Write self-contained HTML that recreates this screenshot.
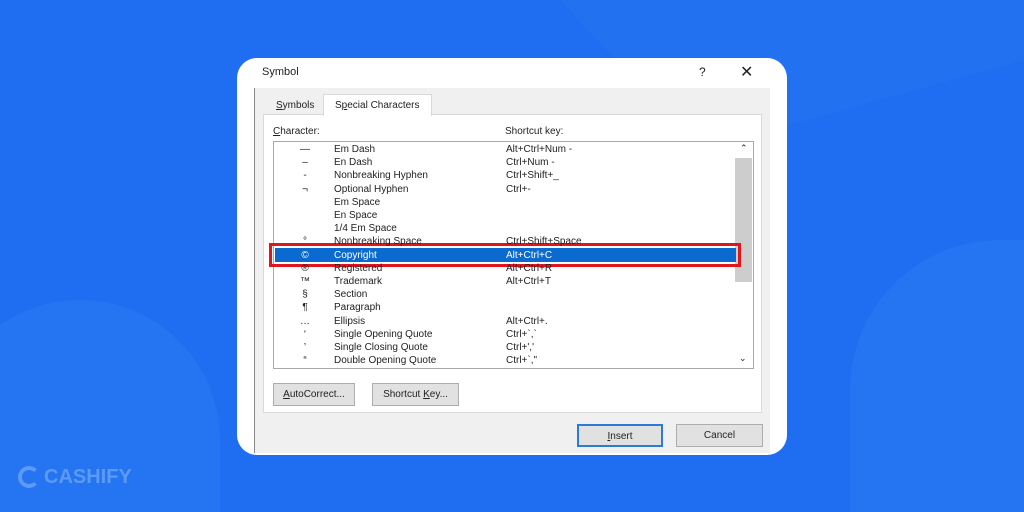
<!DOCTYPE html>
<html style="width:1024px;height:512px;overflow:hidden;background:#1f6df0"><head><style>
*{margin:0;padding:0;box-sizing:border-box}
body{width:1024px;height:512px;overflow:hidden;background:#1f6df0;font-family:"Liberation Sans",sans-serif}
#w{position:relative;width:1024px;height:512px;overflow:hidden}
.a{position:absolute}
.t{font-size:10px;color:#222;white-space:nowrap}
.btn{position:absolute;background:#e1e1e1;border:1px solid #adadad;font-size:10px;text-align:center;line-height:21px;color:#222}
</style></head><body><div id="w">
<div class="a" style="left:-60px;top:300px;width:280px;height:212px;border-radius:140px 140px 0 0;background:#2574f2"></div>
<div class="a" style="left:850px;top:240px;width:174px;height:272px;border-radius:150px 0 0 0;background:#2574f2"></div>
<div class="a" style="left:560px;top:0;width:464px;height:150px;background:#2271f1;clip-path:polygon(0 0,100% 0,100% 40%,30% 100%)"></div>
<div class="a" style="left:18px;top:466px;width:22px;height:22px;border:4px solid #5b9af5;border-radius:50%;border-right-color:transparent"></div>
<div class="a" style="left:44px;top:466px;font-size:20px;font-weight:bold;color:#5b9af5">CASHIFY</div>
<div class="a" style="left:237px;top:58px;width:550px;height:397px;background:#fff;border-radius:20px;overflow:hidden">
 <div class="a" style="left:17px;top:0;width:516px;height:395px;background:#f0f0f0;border-left:1px solid #888"></div>
 <div class="a" style="left:17px;top:0;width:516px;height:30px;background:#fff"></div>
 <div class="a t" style="left:25px;top:8px;font-size:11px">Symbol</div>
 <div class="a t" style="left:462px;top:7px;font-size:12px">?</div>
 <div class="a t" style="left:503px;top:4px;font-size:16px">✕</div>
 <div class="a" style="left:26px;top:56px;width:499px;height:299px;background:#fff;border:1px solid #d9d9d9"></div>
 <div class="a" style="left:86px;top:36px;width:109px;height:22px;background:#fff;border:1px solid #d9d9d9;border-bottom:none"></div>
 <div class="a t" style="left:39px;top:42px"><u>S</u>ymbols</div>
 <div class="a t" style="left:98px;top:42px">S<u>p</u>ecial Characters</div>
 <div class="a t" style="left:36px;top:68px"><u>C</u>haracter:</div>
 <div class="a t" style="left:268px;top:68px">Shortcut key:</div>
 <div class="a" style="left:36px;top:83px;width:481px;height:228px;background:#fff;border:1px solid #aaa"></div>
 <div class="a" style="left:498px;top:100px;width:17px;height:124px;background:#cdcdcd"></div>
 <div class="a t" style="left:503px;top:85px;font-size:9px">⌃</div>
 <div class="a t" style="left:502px;top:295px;font-size:9px">⌄</div>
 <div class="a" style="left:38px;top:190px;width:461px;height:14px;background:#0b6ad0"></div>
 <div class="a" style="left:32px;top:185px;width:472px;height:24px;border:3px solid #e0161e"></div>
 <div class="a" style="left:62px;top:85px;line-height:13.2px;font-size:10px;color:#222;text-align:center;width:12px">—<br>–<br>-<br>¬<br>&nbsp;<br>&nbsp;<br>&nbsp;<br>°<br><span style="color:#fff">©</span><br>®<br>™<br>§<br>¶<br>…<br>‘<br>’<br>“</div>
 <div class="a" style="left:97px;top:85px;line-height:13.2px;font-size:10px;color:#222">Em Dash<br>En Dash<br>Nonbreaking Hyphen<br>Optional Hyphen<br>Em Space<br>En Space<br>1/4 Em Space<br>Nonbreaking Space<br><span style="color:#fff">Copyright</span><br>Registered<br>Trademark<br>Section<br>Paragraph<br>Ellipsis<br>Single Opening Quote<br>Single Closing Quote<br>Double Opening Quote</div>
 <div class="a" style="left:269px;top:85px;line-height:13.2px;font-size:10px;color:#222">Alt+Ctrl+Num -<br>Ctrl+Num -<br>Ctrl+Shift+_<br>Ctrl+-<br>&nbsp;<br>&nbsp;<br>&nbsp;<br>Ctrl+Shift+Space<br><span style="color:#fff">Alt+Ctrl+C</span><br>Alt+Ctrl+R<br>Alt+Ctrl+T<br>&nbsp;<br>&nbsp;<br>Alt+Ctrl+.<br>Ctrl+`,`<br>Ctrl+',' <br>Ctrl+`,"</div>
 <div class="btn" style="left:36px;top:325px;width:82px;height:23px"><u>A</u>utoCorrect...</div>
 <div class="btn" style="left:135px;top:325px;width:87px;height:23px">Shortcut <u>K</u>ey...</div>
 <div class="btn" style="left:340px;top:366px;width:86px;height:23px;border:2px solid #2d7ad6"><u>I</u>nsert</div>
 <div class="btn" style="left:439px;top:366px;width:87px;height:23px">Cancel</div>
</div>
</div></body></html>
